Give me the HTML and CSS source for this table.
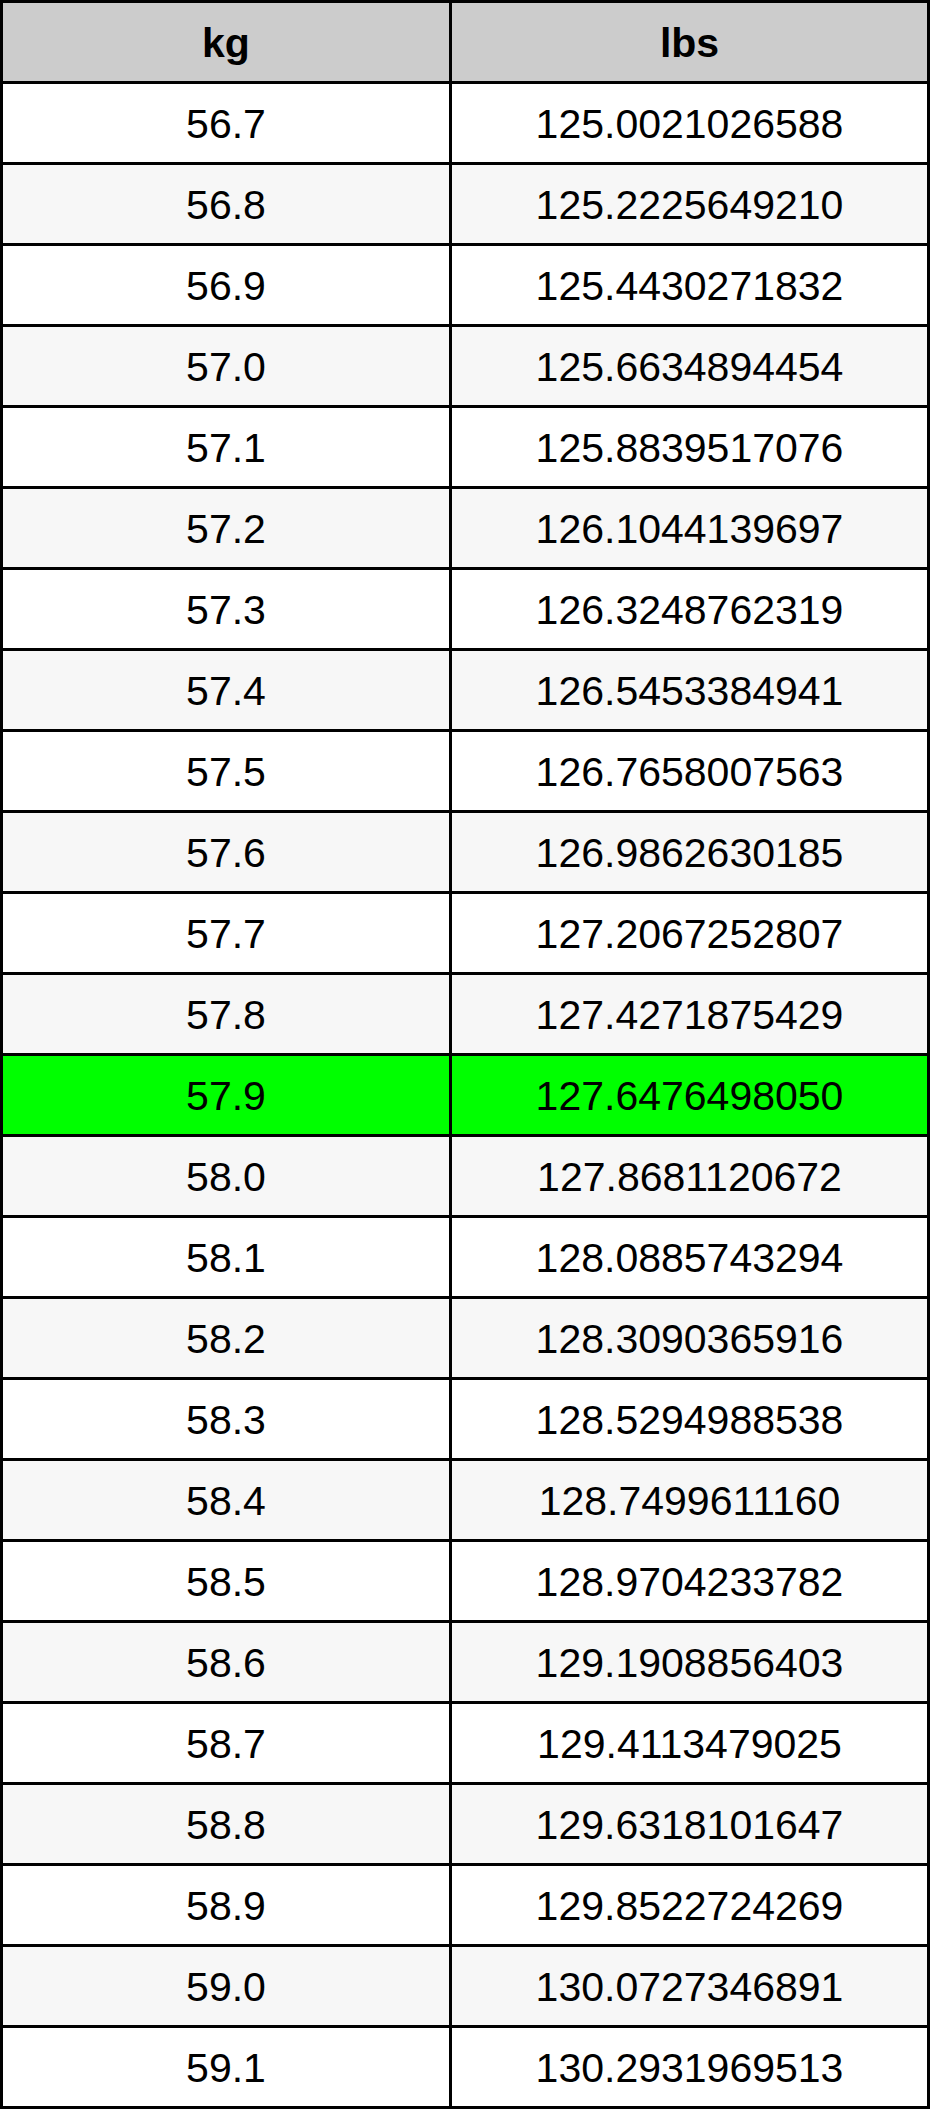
FILE: index.html
```html
<!DOCTYPE html>
<html lang="en">
<head>
<meta charset="utf-8">
<title>kg to lbs</title>
<link rel="stylesheet" href="styles.css">
</head>
<body>
<table class="conv">
<thead>
<tr><th>kg</th><th>lbs</th></tr>
</thead>
<tbody>
<tr><td>56.7</td><td>125.0021026588</td></tr>
<tr><td>56.8</td><td>125.2225649210</td></tr>
<tr><td>56.9</td><td>125.4430271832</td></tr>
<tr><td>57.0</td><td>125.6634894454</td></tr>
<tr><td>57.1</td><td>125.8839517076</td></tr>
<tr><td>57.2</td><td>126.1044139697</td></tr>
<tr><td>57.3</td><td>126.3248762319</td></tr>
<tr><td>57.4</td><td>126.5453384941</td></tr>
<tr><td>57.5</td><td>126.7658007563</td></tr>
<tr><td>57.6</td><td>126.9862630185</td></tr>
<tr><td>57.7</td><td>127.2067252807</td></tr>
<tr><td>57.8</td><td>127.4271875429</td></tr>
<tr class="hl"><td>57.9</td><td>127.6476498050</td></tr>
<tr><td>58.0</td><td>127.8681120672</td></tr>
<tr><td>58.1</td><td>128.0885743294</td></tr>
<tr><td>58.2</td><td>128.3090365916</td></tr>
<tr><td>58.3</td><td>128.5294988538</td></tr>
<tr><td>58.4</td><td>128.7499611160</td></tr>
<tr><td>58.5</td><td>128.9704233782</td></tr>
<tr><td>58.6</td><td>129.1908856403</td></tr>
<tr><td>58.7</td><td>129.4113479025</td></tr>
<tr><td>58.8</td><td>129.6318101647</td></tr>
<tr><td>58.9</td><td>129.8522724269</td></tr>
<tr><td>59.0</td><td>130.0727346891</td></tr>
<tr><td>59.1</td><td>130.2931969513</td></tr>
</tbody>
</table>
</body>
</html>
```

FILE: styles.css
```css
html, body {
  margin: 0;
  padding: 0;
  background: #ffffff;
}

.conv {
  width: 930px;
  table-layout: fixed;
  border-collapse: separate;
  border-spacing: 0;
  border-top: 3px solid #000;
  border-left: 3px solid #000;
  font-family: "Liberation Sans", Arial, sans-serif;
  font-size: 41px;
  color: #000;
}

.conv th,
.conv td {
  box-sizing: border-box;
  height: 81px;
  padding: 2px 0 0 0;
  border-right: 3px solid #000;
  border-bottom: 3px solid #000;
  text-align: center;
  vertical-align: middle;
  line-height: 46px;
}

.conv th:first-child,
.conv td:first-child {
  width: 449px;
}

.conv th {
  background: #cccccc;
  font-weight: bold;
}

.conv tbody tr:nth-child(even) {
  background: #f7f7f7;
}

.conv tbody tr.hl {
  background: #00ff00;
}
```
